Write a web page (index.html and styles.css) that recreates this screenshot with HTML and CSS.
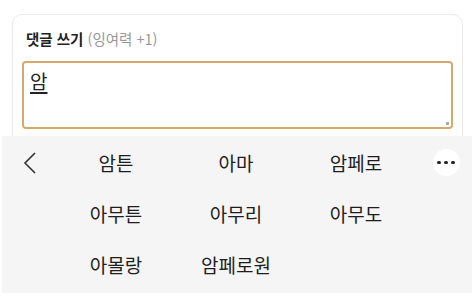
FILE: index.html
```html
<!DOCTYPE html>
<html lang="ko">
<head>
    <meta charset="UTF-8">
    <meta name="viewport" content="width=device-width, initial-scale=1.0">
    <title>댓글 쓰기</title>
    <link rel="stylesheet" href="styles.css">
</head>
<body>
    <div class="comment-card">
        <div class="comment-title"><b>댓글 쓰기</b> <span class="bonus">(잉여력 +1)</span></div>
        <div class="comment-input"><span class="composing">암</span></div>
    </div>

    <div class="suggest-panel">
        <div class="back-btn">
            <svg width="14" height="22" viewBox="0 0 14 22">
                <polyline points="12,1 2,11 12,21" fill="none" stroke="#333" stroke-width="1.6" stroke-linejoin="miter"/>
            </svg>
        </div>
        <div class="word">암튼</div>
        <div class="word">아마</div>
        <div class="word">암페로</div>
        <div class="more-btn"><span></span><span></span><span></span></div>

        <div></div>
        <div class="word">아무튼</div>
        <div class="word">아무리</div>
        <div class="word">아무도</div>
        <div></div>

        <div></div>
        <div class="word">아몰랑</div>
        <div class="word">암페로원</div>
        <div></div>
        <div></div>
    </div>
</body>
</html>
```

FILE: styles.css
```css
body {
    margin: 0;
    background-color: #fff;
    font-family: "Noto Sans CJK KR", "Noto Sans", sans-serif;
    color: #222;
}
.comment-card {
    margin: 14px 11px 0 12px;
    height: 270px;
    border: 1px solid #ebebeb;
    border-radius: 10px;
    padding: 13px 9px 0 9px;
    box-sizing: border-box;
}
.comment-title {
    font-size: 14.5px;
    line-height: 22px;
    padding-left: 4px;
}
.comment-title b {
    font-weight: 700;
    color: #222;
}
.bonus {
    color: #999;
}
.comment-input {
    position: relative;
    margin-top: 11px;
    height: 68px;
    border: 2px solid #d3aa6c;
    border-radius: 4px;
    padding: 4px 6px;
    box-sizing: border-box;
    font-size: 19px;
    line-height: 28px;
}
.comment-input::after {
    content: "";
    position: absolute;
    right: 2px;
    bottom: 2px;
    width: 3px;
    height: 3px;
    background: #aaa;
}
.composing {
    text-decoration: underline;
    text-underline-offset: 3px;
    text-decoration-thickness: 1.5px;
}
.suggest-panel {
    position: absolute;
    top: 136px;
    left: 2px;
    right: 2px;
    height: 157px;
    padding-top: 1px;
    box-sizing: border-box;
    background-color: #f5f5f5;
    display: grid;
    grid-template-columns: 54px 120px 120px 120px 1fr;
    grid-auto-rows: 51px;
    align-items: center;
}
.word {
    text-align: center;
    font-size: 19px;
    color: #1e1e1e;
}
.back-btn {
    display: flex;
    justify-content: center;
    padding-left: 2px;
}
.more-btn {
    justify-self: center;
    margin-left: 4px;
    width: 27px;
    height: 27px;
    border-radius: 50%;
    background-color: #fff;
    display: flex;
    justify-content: center;
    align-items: center;
    gap: 3.5px;
}
.more-btn span {
    width: 3.5px;
    height: 3.5px;
    border-radius: 50%;
    background-color: #222;
}
```
